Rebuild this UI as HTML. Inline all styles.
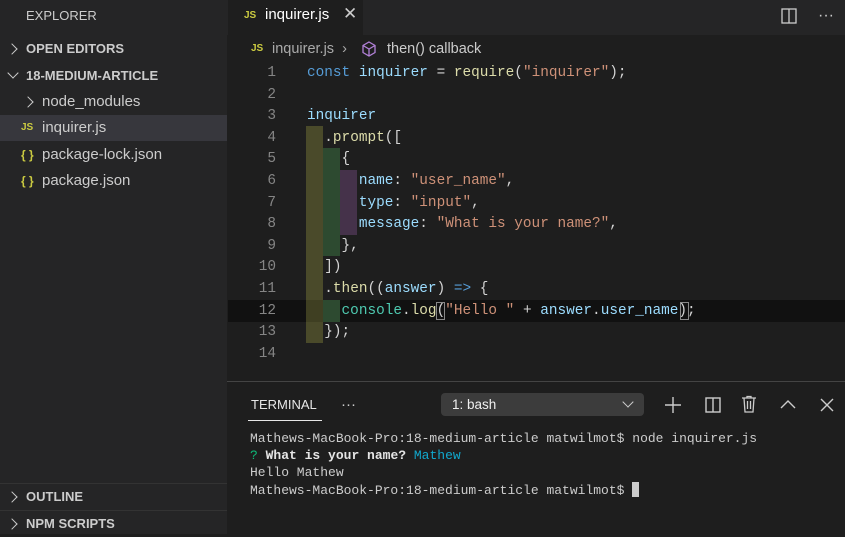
<!DOCTYPE html>
<html><head><meta charset="utf-8"><style>
*{margin:0;padding:0;box-sizing:border-box}
body{width:845px;height:534px;background:#1e1e1e;overflow:hidden;font-family:"Liberation Sans",sans-serif;color:#ccc;position:relative}
.abs{position:absolute;white-space:pre}
#side{position:absolute;left:0;top:0;width:227px;height:534px;background:#252526}
.row{position:absolute;left:0;width:227px;height:26px;line-height:26px;font-size:15px;color:#ccc;white-space:pre}
.hdr{font-weight:bold;font-size:13px;color:#ccc}
.chev{position:absolute;width:8px;height:8px;border-right:1.5px solid #ccc;border-bottom:1.5px solid #ccc}
.code{position:absolute;left:0;font-family:"Liberation Mono",monospace;font-size:14.4px;white-space:pre;height:21.6px;line-height:21.6px}
.ln{position:absolute;width:48px;left:228px;text-align:right;color:#858585;font-family:"Liberation Mono",monospace;font-size:14.4px;height:21.6px;line-height:21.6px}
.v{color:#9cdcfe}.k{color:#569cd6}.f{color:#dcdcaa}.s{color:#ce9178}.c{color:#4ec9b0}.p{color:#d4d4d4}
.term{position:absolute;left:250px;font-family:"Liberation Mono",monospace;font-size:13px;color:#ccc;white-space:pre;line-height:17px}
</style></head><body>
<div id="side">
<div class="abs" style="left:26px;top:8px;font-size:13px;color:#ccc">EXPLORER</div>
<div class="row" style="top:36px"><span class="chev" style="left:8px;top:9px;transform:rotate(-45deg)"></span><span class="hdr" style="position:absolute;left:26px">OPEN EDITORS</span></div>
<div class="row" style="top:63px"><span class="chev" style="left:9px;top:6px;transform:rotate(45deg)"></span><span class="hdr" style="position:absolute;left:26px">18-MEDIUM-ARTICLE</span></div>
<div class="row" style="top:89px"><span class="chev" style="left:24px;top:9px;transform:rotate(-45deg)"></span><span style="position:absolute;left:42px">node_modules</span></div>
<div class="row" style="top:115px;background:#37373d;width:227px"><span style="position:absolute;left:21px;color:#cbcb41;font-size:10px;font-weight:bold">JS</span><span style="position:absolute;left:42px">inquirer.js</span></div>
<div class="row" style="top:142px"><span style="position:absolute;left:21px;color:#cbcb41;font-size:12px;font-weight:bold">{ }</span><span style="position:absolute;left:42px">package-lock.json</span></div>
<div class="row" style="top:168px"><span style="position:absolute;left:21px;color:#cbcb41;font-size:12px;font-weight:bold">{ }</span><span style="position:absolute;left:42px">package.json</span></div>
<div class="row" style="top:483px;border-top:1px solid #333"><span class="chev" style="left:8px;top:9px;transform:rotate(-45deg)"></span><span class="hdr" style="position:absolute;left:26px">OUTLINE</span></div>
<div class="row" style="top:510px;border-top:1px solid #333"><span class="chev" style="left:8px;top:9px;transform:rotate(-45deg)"></span><span class="hdr" style="position:absolute;left:26px">NPM SCRIPTS</span></div>
</div>
<div style="position:absolute;left:227px;top:0;width:618px;height:35px;background:#252526"></div>
<div style="position:absolute;left:228px;top:0;width:135px;height:35px;background:#1e1e1e"></div>
<div class="abs" style="left:244px;top:10px;color:#cbcb41;font-size:10px;font-weight:bold">JS</div>
<div class="abs" style="left:265px;top:6px;color:#fff;font-size:15px">inquirer.js</div>
<div class="abs" style="left:343px;top:4px;color:#ccc;font-size:17px">✕</div>
<svg style="position:absolute;left:781px;top:8px" width="16" height="16"><rect x="1" y="1" width="14" height="14" fill="none" stroke="#ccc" stroke-width="1.3"/><line x1="8" y1="1" x2="8" y2="15" stroke="#ccc" stroke-width="1.3"/></svg>
<div class="abs" style="left:818px;top:7px;color:#ccc;font-size:16px">···</div>
<div class="abs" style="left:251px;top:43px;color:#cbcb41;font-size:10px;font-weight:bold">JS</div>
<div class="abs" style="left:272px;top:41px;color:#aaa;font-size:14.5px">inquirer.js  ›</div>
<svg style="position:absolute;left:361px;top:41px" width="16" height="16"><path d="M8 1 L14 4.5 L14 11.5 L8 15 L2 11.5 L2 4.5 Z M2 4.5 L8 8 L14 4.5 M8 8 L8 15" fill="none" stroke="#b180d7" stroke-width="1.3"/></svg>
<div class="abs" style="left:387px;top:41px;color:#ccc;font-size:14.5px">then() callback</div>
<div style="position:absolute;left:306px;top:126px;width:17px;height:217px;background:#4a4a2a"></div>
<div style="position:absolute;left:323px;top:148px;width:17px;height:108px;background:#2d4a30"></div>
<div style="position:absolute;left:340px;top:170px;width:17px;height:65px;background:#45324a"></div>
<div style="position:absolute;left:228px;top:300px;width:617px;height:22px;background:#111"></div>
<div style="position:absolute;left:306px;top:300px;width:17px;height:22px;background:#3f3f22"></div>
<div style="position:absolute;left:323px;top:300px;width:17px;height:22px;background:#2d4a30"></div>
<div style="position:absolute;left:436px;top:302px;width:9px;height:18px;border:1px solid #888"></div>
<div style="position:absolute;left:680px;top:302px;width:9px;height:18px;border:1px solid #888"></div>
<div style="position:absolute;left:0;top:2px;width:845px">
<div class="ln" style="top:61px">1</div><div class="ln" style="top:82.6px">2</div><div class="ln" style="top:104.2px">3</div><div class="ln" style="top:125.8px">4</div><div class="ln" style="top:147.4px">5</div><div class="ln" style="top:169px">6</div><div class="ln" style="top:190.6px">7</div><div class="ln" style="top:212.2px">8</div><div class="ln" style="top:233.8px">9</div><div class="ln" style="top:255.4px">10</div><div class="ln" style="top:277px">11</div><div class="ln" style="top:298.6px">12</div><div class="ln" style="top:320.2px">13</div><div class="ln" style="top:341.8px">14</div>
</div>
<div style="position:absolute;left:307px;top:2px">
<div class="code" style="top:61px"><span class="k">const</span> <span class="v">inquirer</span> <span class="p">=</span> <span class="f">require</span><span class="p">(</span><span class="s">"inquirer"</span><span class="p">);</span></div>
<div class="code" style="top:104.2px"><span class="v">inquirer</span></div>
<div class="code" style="top:125.8px"><span class="p">  .</span><span class="f">prompt</span><span class="p">([</span></div>
<div class="code" style="top:147.4px"><span class="p">    {</span></div>
<div class="code" style="top:169px">      <span class="v">name</span><span class="p">:</span> <span class="s">"user_name"</span><span class="p">,</span></div>
<div class="code" style="top:190.6px">      <span class="v">type</span><span class="p">:</span> <span class="s">"input"</span><span class="p">,</span></div>
<div class="code" style="top:212.2px">      <span class="v">message</span><span class="p">:</span> <span class="s">"What is your name?"</span><span class="p">,</span></div>
<div class="code" style="top:233.8px"><span class="p">    },</span></div>
<div class="code" style="top:255.4px"><span class="p">  ])</span></div>
<div class="code" style="top:277px"><span class="p">  .</span><span class="f">then</span><span class="p">((</span><span class="v">answer</span><span class="p">)</span> <span class="k">=&gt;</span> <span class="p">{</span></div>
<div class="code" style="top:298.6px">    <span class="c">console</span><span class="p">.</span><span class="f">log</span><span class="p">(</span><span class="s">"Hello "</span> <span class="p">+</span> <span class="v">answer</span><span class="p">.</span><span class="v">user_name</span><span class="p">);</span></div>
<div class="code" style="top:320.2px"><span class="p">  });</span></div>
</div>
<div style="position:absolute;left:227px;top:381px;width:618px;height:1px;background:#444"></div>
<div class="abs" style="left:251px;top:397px;font-size:13px;color:#e7e7e7">TERMINAL</div>
<div style="position:absolute;left:248px;top:420px;width:74px;height:1px;background:#e7e7e7"></div>
<div class="abs" style="left:341px;top:396px;font-size:15px;color:#ccc">···</div>
<div style="position:absolute;left:441px;top:393px;width:203px;height:23px;background:#3c3c3c;border-radius:4px"></div>
<div class="abs" style="left:452px;top:397px;font-size:13.5px;color:#f0f0f0">1: bash</div>
<span class="chev" style="left:624px;top:398px;transform:rotate(45deg)"></span>
<svg style="position:absolute;left:664px;top:396px" width="18" height="18"><path d="M9 1V17M1 9H17" stroke="#ccc" stroke-width="1.4"/></svg>
<svg style="position:absolute;left:704px;top:396px" width="18" height="18"><rect x="2" y="2" width="14" height="14" fill="none" stroke="#ccc" stroke-width="1.4"/><path d="M9 2V16" stroke="#ccc" stroke-width="1.4"/></svg>
<svg style="position:absolute;left:740px;top:395px" width="18" height="18"><path d="M2 3H16M7 3V1.5H11V3M4 3L5 17H13L14 3M7.5 6V14M10.5 6V14" fill="none" stroke="#ccc" stroke-width="1.3"/></svg>
<svg style="position:absolute;left:779px;top:396px" width="18" height="18"><path d="M2 12L9 5L16 12" fill="none" stroke="#ccc" stroke-width="1.4"/></svg>
<svg style="position:absolute;left:818px;top:396px" width="18" height="18"><path d="M3 3L15 15M15 3L3 15" stroke="#ccc" stroke-width="1.4"/></svg>
<div class="term" style="top:430px">Mathews-MacBook-Pro:18-medium-article matwilmot$ node inquirer.js</div>
<div class="term" style="top:447px"><span style="color:#0dbc79">?</span> <b style="color:#e5e5e5">What is your name?</b> <span style="color:#11a8cd">Mathew</span></div>
<div class="term" style="top:464px">Hello Mathew</div>
<div class="term" style="top:482px">Mathews-MacBook-Pro:18-medium-article matwilmot$ <span style="display:inline-block;width:7px;height:15px;background:#ccc;vertical-align:-3px"></span></div>
</body></html>
